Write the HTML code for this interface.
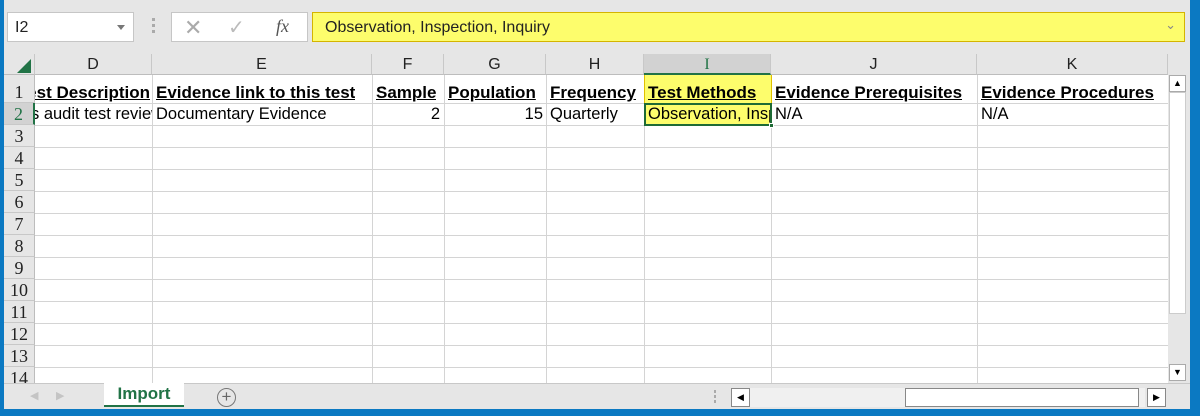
<!DOCTYPE html>
<html><head><meta charset="utf-8"><style>
*{margin:0;padding:0;box-sizing:border-box}
body{width:1200px;height:416px;overflow:hidden;background:#0b79c2;font-family:"Liberation Sans",sans-serif;position:relative}
.win{position:absolute;left:4px;top:0;width:1186px;height:409px;background:#e6e6e6}
.abs{position:absolute}
.nb{left:3px;top:12px;width:127px;height:30px;background:#fff;border:1px solid #c6c6c6;font-size:16px;padding:6px 0 0 7px;color:#222}
.fb{left:167px;top:12px;width:137px;height:30px;background:#fff;border:1px solid #c6c6c6}
.fx{left:308px;top:12px;width:873px;height:30px;background:#fdfd6c;border:1px solid #d4b400;font-size:16px;padding:6px 0 0 12px;color:#222}
.grid{left:0;top:54px;width:1164px;height:329px;background:#fff;overflow:hidden}
.ch{position:absolute;top:0;height:21px;background:#e6e6e6;border-right:1px solid #c8c8c8;border-bottom:1px solid #bdbdbd;font-size:16px;text-align:center;line-height:21px;color:#222}
.rh{position:absolute;left:0;width:31px;background:#e6e6e6;border-right:1px solid #bdbdbd;border-bottom:1px solid #c8c8c8;font-family:"Liberation Serif",serif;font-size:18px;text-align:center;color:#222}
.vl{position:absolute;top:21px;width:1px;height:310px;background:#d4d4d4}
.hl{position:absolute;left:31px;width:1140px;height:1px;background:#d4d4d4}
.t{position:absolute;font-size:16.5px;white-space:nowrap;color:#000;overflow:hidden}
.b{font-weight:bold;text-decoration:underline;font-size:17px}
</style></head><body>
<div class="win">
<div class="abs nb">I2<span style="position:absolute;right:8px;top:12px;border:4px solid transparent;border-top:5px solid #777"></span></div>
<div class="abs" style="left:148px;top:18px;width:3px;height:3px;background:#aaa;box-shadow:0 6px #aaa,0 12px #aaa"></div>
<div class="abs fb">
<span class="abs" style="left:12px;top:2px;font-size:22px;color:#aaa">✕</span>
<span class="abs" style="left:56px;top:2px;font-size:20px;color:#bbb">✓</span>
<span class="abs" style="left:104px;top:3px;font-size:18px;font-style:italic;font-family:'Liberation Serif',serif;color:#555">fx</span>
</div>
<div class="abs fx">Observation, Inspection, Inquiry<span style="position:absolute;right:8px;top:4px;color:#888;font-size:13px">⌄</span></div>
<div class="abs grid">
<div class="ch" style="left:0;width:31px;background:#e6e6e6"></div>
<div class="abs" style="left:13px;top:5px;width:0;height:0;border-left:14px solid transparent;border-bottom:14px solid #217346"></div>
<div class="ch" style="left:31px;width:117px">D</div>
<div class="ch" style="left:148px;width:220px">E</div>
<div class="ch" style="left:368px;width:72px">F</div>
<div class="ch" style="left:440px;width:102px">G</div>
<div class="ch" style="left:542px;width:98px">H</div>
<div class="ch" style="left:640px;width:127px;background:#d2d2d2;color:#217346;border-bottom:2px solid #217346;font-family:'Liberation Serif',serif">I</div>
<div class="ch" style="left:767px;width:206px">J</div>
<div class="ch" style="left:973px;width:191px">K</div>
<div class="rh" style="top:21px;height:28px;line-height:34px">1</div>
<div class="rh" style="top:49px;height:22px;line-height:22px;background:#d2d2d2;color:#217346;border-right:2px solid #217346">2</div>
<div class="rh" style="top:71px;height:22px;line-height:22px">3</div>
<div class="rh" style="top:93px;height:22px;line-height:22px">4</div>
<div class="rh" style="top:115px;height:22px;line-height:22px">5</div>
<div class="rh" style="top:137px;height:22px;line-height:22px">6</div>
<div class="rh" style="top:159px;height:22px;line-height:22px">7</div>
<div class="rh" style="top:181px;height:22px;line-height:22px">8</div>
<div class="rh" style="top:203px;height:22px;line-height:22px">9</div>
<div class="rh" style="top:225px;height:22px;line-height:22px">10</div>
<div class="rh" style="top:247px;height:22px;line-height:22px">11</div>
<div class="rh" style="top:269px;height:22px;line-height:22px">12</div>
<div class="rh" style="top:291px;height:22px;line-height:22px">13</div>
<div class="rh" style="top:313px;height:22px;line-height:22px">14</div>
<div class="vl" style="left:148px"></div><div class="vl" style="left:368px"></div><div class="vl" style="left:440px"></div><div class="vl" style="left:542px"></div><div class="vl" style="left:640px"></div><div class="vl" style="left:767px"></div><div class="vl" style="left:973px"></div>
<div class="hl" style="top:49px"></div><div class="hl" style="top:71px"></div><div class="hl" style="top:93px"></div><div class="hl" style="top:115px"></div><div class="hl" style="top:137px"></div><div class="hl" style="top:159px"></div><div class="hl" style="top:181px"></div><div class="hl" style="top:203px"></div><div class="hl" style="top:225px"></div><div class="hl" style="top:247px"></div><div class="hl" style="top:269px"></div><div class="hl" style="top:291px"></div><div class="hl" style="top:313px"></div>
<div class="abs" style="left:640px;top:21px;width:128px;height:29px;background:#fdfd6c;border-left:1px solid #e0c000;border-right:1px solid #e0c000"></div>
<div class="abs" style="left:640px;top:49px;width:128px;height:23px;background:#fdfd6c;border:2px solid #1e6b35"></div>
<div class="abs" style="left:765px;top:69px;width:5px;height:5px;background:#1e6b35;border:1px solid #fff"></div>
<div class="abs" style="left:31px;top:29px;width:116px;height:22px;overflow:hidden"><span class="t b" style="right:1px;top:0;overflow:visible">Test Description</span></div>
<div class="t b" style="left:152px;top:29px">Evidence link to this test</div>
<div class="t b" style="left:372px;top:29px">Sample</div>
<div class="t b" style="left:444px;top:29px">Population</div>
<div class="t b" style="left:546px;top:29px">Frequency</div>
<div class="t b" style="left:644px;top:29px">Test Methods</div>
<div class="t b" style="left:771px;top:29px">Evidence Prerequisites</div>
<div class="t b" style="left:977px;top:29px">Evidence Procedures</div>
<div class="abs" style="left:31px;top:51px;width:117px;height:20px;overflow:hidden"><span class="t" style="left:-4px;top:0;overflow:visible">s audit test review</span></div>
<div class="t" style="left:152px;top:51px">Documentary Evidence</div>
<div class="t" style="left:368px;top:51px;width:68px;text-align:right">2</div>
<div class="t" style="left:440px;top:51px;width:99px;text-align:right">15</div>
<div class="t" style="left:546px;top:51px">Quarterly</div>
<div class="t" style="left:644px;top:51px;width:122px">Observation, Inspection, Inquiry</div>
<div class="t" style="left:771px;top:51px">N/A</div>
<div class="t" style="left:977px;top:51px">N/A</div>
</div>
<div class="abs" style="left:1164px;top:54px;width:20px;height:329px;background:#e6e6e6">
<div class="abs" style="left:1px;top:21px;width:17px;height:17px;background:#fff;border:1px solid #aaa;font-size:9px;text-align:center;line-height:15px">▲</div>
<div class="abs" style="left:1px;top:38px;width:17px;height:222px;background:#fff;border:1px solid #ccc"></div>
<div class="abs" style="left:1px;top:310px;width:17px;height:17px;background:#fff;border:1px solid #aaa;font-size:9px;text-align:center;line-height:15px">▼</div>
</div>
<div class="abs" style="left:0;top:383px;width:1186px;height:26px;background:#e6e6e6;border-top:1px solid #c8c8c8">
<span class="abs" style="left:26px;top:5px;color:#c4c4c4;font-size:11px">◀</span>
<span class="abs" style="left:52px;top:5px;color:#c4c4c4;font-size:11px">▶</span>
<div class="abs" style="left:100px;top:-1px;width:80px;height:24px;background:#fff;border-bottom:2px solid #217346;color:#217346;font-weight:bold;font-size:17px;text-align:center;line-height:22px">Import</div>
<div class="abs" style="left:213px;top:4px;width:19px;height:19px;border:1px solid #777;border-radius:50%;color:#666;font-size:17px;text-align:center;line-height:16px">+</div>
<div class="abs" style="left:710px;top:6px;width:2px;height:14px;background:repeating-linear-gradient(#aaa 0 3px,transparent 3px 5px)"></div>
<div class="abs" style="left:727px;top:4px;width:414px;height:19px;background:#f0f0f0"></div>
<div class="abs" style="left:727px;top:4px;width:19px;height:19px;background:#fff;border:1px solid #888;font-size:9px;text-align:center;line-height:17px">◀</div>
<div class="abs" style="left:901px;top:4px;width:234px;height:19px;background:#fff;border:1px solid #888"></div>
<div class="abs" style="left:1143px;top:4px;width:19px;height:19px;background:#fff;border:1px solid #888;font-size:9px;text-align:center;line-height:17px">▶</div>
</div>
</div>
</body></html>
